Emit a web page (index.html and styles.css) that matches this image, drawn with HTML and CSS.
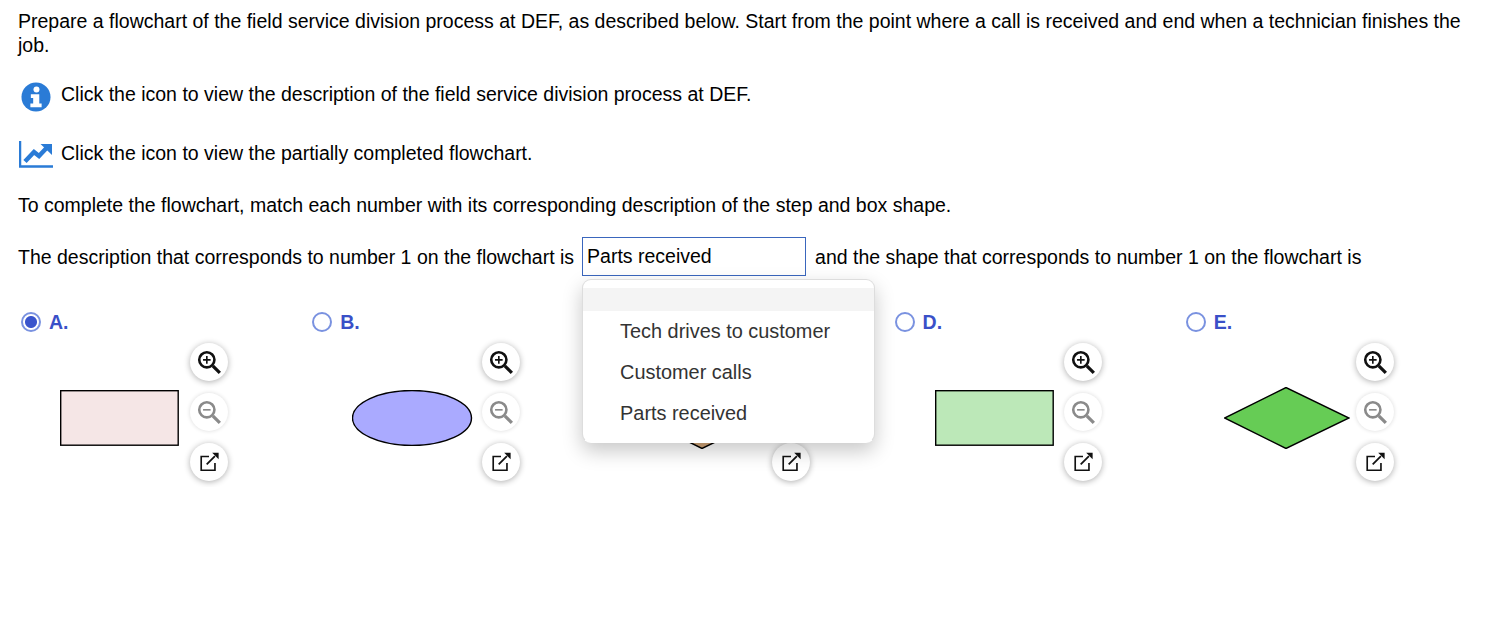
FILE: index.html
```html
<!DOCTYPE html>
<html lang="en">
<head>
<meta charset="utf-8">
<title>Flowchart question</title>
<link rel="stylesheet" href="styles.css">
</head>
<body>
<main class="question">
  <p class="intro">Prepare a flowchart of the field service division process at DEF, as described below. Start from the point where a call is received and end when a technician finishes the job.</p>

  <p class="icon-line info-line">
    <svg class="line-icon" viewBox="0 0 32 32" width="30" height="30" aria-hidden="true">
      <circle cx="16" cy="16" r="15.500" fill="#2a7bd6"/>
      <circle cx="16.500" cy="8" r="3.200" fill="#fff"/>
      <path d="M10.500 13h9v10h2.500v4h-12v-4H13v-6h-2.500z" fill="#fff"/>
    </svg>
    <span>Click the icon to view the description of the field service division process at DEF.</span>
  </p>

  <p class="icon-line chart-line">
    <svg class="line-icon" viewBox="0 0 34 27" width="34" height="27" aria-hidden="true">
      <path d="M1 0v25.500h33" fill="none" stroke="#2a7bd6" stroke-width="2.500"/>
      <path d="M6 20.500l9-9.500 5 4 8-8.500" fill="none" stroke="#2a7bd6" stroke-width="4.500"/>
      <path d="M21.500 3H33v11z" fill="#2a7bd6"/>
    </svg>
    <span>Click the icon to view the partially completed flowchart.</span>
  </p>

  <p class="instruction">To complete the flowchart, match each number with its corresponding description of the step and box shape.</p>

  <p class="fill-line">
    <span>The description that corresponds to number 1 on the flowchart is</span>
    <span class="choice">
      <span class="choice-box">Parts received</span>
      <span class="menu">
        <span class="menu-item blank"></span>
        <span class="menu-item">Tech drives to customer</span>
        <span class="menu-item">Customer calls</span>
        <span class="menu-item">Parts received</span>
      </span>
    </span>
    <span>and the shape that corresponds to number 1 on the flowchart is</span>
  </p>

  <section class="options">
    <article class="option">
      <div class="option-label"><span class="radio checked"></span><b>A.</b></div>
      <div class="option-body">
        <div class="figure"><svg viewBox="0 0 120 56" width="120" height="56"><rect x="0.700" y="0.700" width="117.500" height="54.500" fill="#f5e6e6" stroke="#000" stroke-width="1.400"/></svg></div>
        <div class="tools">
          <button class="tool"><svg viewBox="0 0 24 24" width="26" height="26"><use href="#zoom-in"/></svg></button>
          <button class="tool muted"><svg viewBox="0 0 24 24" width="26" height="26"><use href="#zoom-out"/></svg></button>
          <button class="tool"><svg viewBox="0 0 24 24" width="22" height="22"><use href="#popout"/></svg></button>
        </div>
      </div>
    </article>

    <article class="option">
      <div class="option-label"><span class="radio"></span><b>B.</b></div>
      <div class="option-body">
        <div class="figure figure-wide"><svg class="shifted" viewBox="0 0 121 56" width="121" height="56"><ellipse cx="60" cy="28" rx="59.500" ry="27.500" fill="#aaaaff" stroke="#000" stroke-width="1.400"/></svg></div>
        <div class="tools">
          <button class="tool"><svg viewBox="0 0 24 24" width="26" height="26"><use href="#zoom-in"/></svg></button>
          <button class="tool muted"><svg viewBox="0 0 24 24" width="26" height="26"><use href="#zoom-out"/></svg></button>
          <button class="tool"><svg viewBox="0 0 24 24" width="22" height="22"><use href="#popout"/></svg></button>
        </div>
      </div>
    </article>

    <article class="option">
      <div class="option-label"><span class="radio"></span><b>C.</b></div>
      <div class="option-body">
        <div class="figure"><svg class="diamond" viewBox="0 0 126 62" width="126" height="62"><path d="M62 0.500L125 31 62 61.500 0.500 31z" fill="#d2a679" stroke="#000" stroke-width="1.400"/></svg></div>
        <div class="tools">
          <button class="tool"><svg viewBox="0 0 24 24" width="26" height="26"><use href="#zoom-in"/></svg></button>
          <button class="tool muted"><svg viewBox="0 0 24 24" width="26" height="26"><use href="#zoom-out"/></svg></button>
          <button class="tool"><svg viewBox="0 0 24 24" width="22" height="22"><use href="#popout"/></svg></button>
        </div>
      </div>
    </article>

    <article class="option">
      <div class="option-label"><span class="radio"></span><b>D.</b></div>
      <div class="option-body">
        <div class="figure"><svg class="shifted" viewBox="0 0 120 56" width="120" height="56"><rect x="0.700" y="0.700" width="117.500" height="54.500" fill="#bce8b8" stroke="#000" stroke-width="1.400"/></svg></div>
        <div class="tools">
          <button class="tool"><svg viewBox="0 0 24 24" width="26" height="26"><use href="#zoom-in"/></svg></button>
          <button class="tool muted"><svg viewBox="0 0 24 24" width="26" height="26"><use href="#zoom-out"/></svg></button>
          <button class="tool"><svg viewBox="0 0 24 24" width="22" height="22"><use href="#popout"/></svg></button>
        </div>
      </div>
    </article>

    <article class="option">
      <div class="option-label"><span class="radio"></span><b>E.</b></div>
      <div class="option-body">
        <div class="figure figure-wide"><svg class="diamond-near" viewBox="0 0 126 62" width="126" height="62"><path d="M62 0.500L125 31 62 61.500 0.500 31z" fill="#66cc55" stroke="#000" stroke-width="1.400"/></svg></div>
        <div class="tools">
          <button class="tool"><svg viewBox="0 0 24 24" width="26" height="26"><use href="#zoom-in"/></svg></button>
          <button class="tool muted"><svg viewBox="0 0 24 24" width="26" height="26"><use href="#zoom-out"/></svg></button>
          <button class="tool"><svg viewBox="0 0 24 24" width="22" height="22"><use href="#popout"/></svg></button>
        </div>
      </div>
    </article>
  </section>
</main>

<svg class="sprites" width="0" height="0" aria-hidden="true">
  <symbol id="zoom-in" viewBox="0 0 24 24">
    <circle cx="10" cy="10" r="7" fill="none" stroke="currentColor" stroke-width="2.400"/>
    <path d="M15.500 15.500L22 22" stroke="currentColor" stroke-width="3" fill="none"/>
    <path d="M6.500 10h7M10 6.500v7" stroke="currentColor" stroke-width="1.500" fill="none"/>
  </symbol>
  <symbol id="zoom-out" viewBox="0 0 24 24">
    <circle cx="10" cy="10" r="7" fill="none" stroke="currentColor" stroke-width="2.400"/>
    <path d="M15.500 15.500L22 22" stroke="currentColor" stroke-width="3" fill="none"/>
    <path d="M6.500 10h7" stroke="currentColor" stroke-width="1.500" fill="none"/>
  </symbol>
  <symbol id="popout" viewBox="0 0 24 24">
    <path d="M12 6H3.500v15h15v-8" fill="none" stroke="currentColor" stroke-width="1.800"/>
    <path d="M9.500 14.500L18.500 5.500" stroke="currentColor" stroke-width="1.900" fill="none"/>
    <path d="M15.500 2H22.500V9z" fill="currentColor"/>
  </symbol>
</svg>
</body>
</html>
```
FILE: styles.css
```css
* { box-sizing: border-box; }

html, body { margin: 0; background: #fff; }

body {
  font-family: "Liberation Sans", Arial, sans-serif;
  font-size: 19.500px;
  line-height: 24px;
  color: #000;
}

.question { padding: 9px 0 0 18px; }

p { margin: 0; }

.intro { width: 1452px; }

.icon-line { display: flex; align-items: center; }

.line-icon { flex: none; }

.info-line { margin-top: 20px; height: 34px; padding-left: 3px; gap: 10px; }
.info-line .line-icon { margin-top: 5px; }

.chart-line { margin-top: 27px; height: 30px; padding-left: 1px; gap: 8px; }
.chart-line .line-icon { margin-top: 3px; }

.instruction { margin-top: 25px; }

.fill-line {
  margin-top: 20px;
  height: 40px;
  display: flex;
  align-items: center;
  gap: 8px;
}

.choice { position: relative; flex: none; margin-right: 1px; }

.choice-box {
  display: block;
  width: 224px;
  height: 39px;
  margin-top: -1px;
  padding: 6px 4px;
  border: 1px solid #3a66bd;
}

.menu {
  position: absolute;
  z-index: 2;
  top: 41px;
  left: 0;
  width: 293px;
  height: 164px;
  padding-top: 8px;
  display: block;
  font-size: 19.900px;
  background: #fff;
  border: 1px solid #ddd;
  border-bottom-color: transparent;
  border-radius: 9px;
  box-shadow: 0 8px 20px rgba(0, 0, 0, .22);
  color: #333;
}

.menu-item {
  display: block;
  height: 41px;
  padding: 8.500px 0 0 37px;
}

.menu-item.blank {
  height: 23px;
  padding: 0;
  margin-bottom: -1px;
  background: #f4f4f4;
}

.options {
  display: grid;
  grid-template-columns: repeat(5, 291.200px);
  margin-top: 33px;
  padding-left: 3px;
}

.option-label {
  display: flex;
  align-items: center;
  height: 24px;
  gap: 8px;
  color: #3a50c8;
}

.option-label b { font-weight: 700; }

.radio {
  width: 20px;
  height: 20px;
  border: 2px solid #7a92e0;
  border-radius: 50%;
  background: #fff;
  flex: none;
}

.radio.checked {
  background: radial-gradient(circle, #3a55cc 0 5.500px, #fff 6.500px);
}

.option-body {
  display: flex;
  align-items: center;
  height: 150px;
  margin-top: 3px;
  padding-left: 39px;
}

.figure { display: flex; flex: none; width: 130px; margin-top: 12px; }
.figure-wide { width: 131px; }

.diamond { margin-left: -2px; }
.diamond-near { margin-left: -1px; }
.shifted { margin-left: 1px; }

.tools {
  display: flex;
  flex-direction: column;
  gap: 12px;
  flex: none;
}

.tool {
  display: flex;
  align-items: center;
  justify-content: center;
  width: 38px;
  height: 38px;
  padding: 0;
  border: 0;
  border-radius: 50%;
  background: #fff;
  color: #111;
  box-shadow: 0 1px 6px rgba(0, 0, 0, .32);
}

.tool.muted {
  color: #8a8a8a;
  box-shadow: 0 0 4px rgba(0, 0, 0, .15);
}

.sprites { position: absolute; }
```
